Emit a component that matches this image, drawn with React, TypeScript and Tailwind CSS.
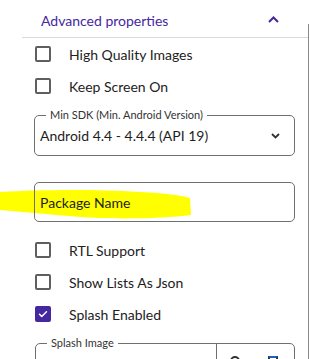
import React from "react";

const font = { fontFamily: "Lato, 'Noto Sans', sans-serif" };

function Box({ checked }: { checked?: boolean }) {
  if (checked) {
    return (
      <span className="flex h-4 w-4 items-center justify-center rounded-[2px] bg-[#4527a0]">
        <svg width="12" height="12" viewBox="0 0 24 24" fill="none" stroke="white" strokeWidth="3" strokeLinecap="round" strokeLinejoin="round">
          <path d="M5 12.5l4.5 4.5L19 7.5" />
        </svg>
      </span>
    );
  }
  return <span className="block h-4 w-4 rounded-[2px] border-2 border-[#5f5f5f]" />;
}

function Row({ label, checked }: { label: string; checked?: boolean }) {
  return (
    <div className="flex h-8 items-center pl-[13px]">
      <Box checked={checked} />
      <span className="ml-[18px] text-[14px] text-[#222]">{label}</span>
    </div>
  );
}

export default function App() {
  return (
    <div className="h-[359px] w-[310px] overflow-hidden bg-white" style={font}>
      <div className="ml-[22px] w-[287px]">
        <div className="relative flex h-[38px] items-center border-b border-[#d9d9d9] pl-[19px] pr-[30px]">
          <span className="pt-[4px] text-[14px] text-[#4527a0]">Advanced properties</span>
          <svg className="ml-auto mt-[2px]" width="11" height="7" viewBox="0 0 11 7" fill="none" stroke="#4527a0" strokeWidth="2">
            <path d="M1 6l4.5-4.5L10 6" />
          </svg>
          <span className="absolute right-0 top-[24px] h-[15px] w-px bg-[#8a8a8a]" />
        </div>
        <div className="border-r border-[#8a8a8a] pb-4">
          <Row label="High Quality Images" />
          <Row label="Keep Screen On" />
          <div className="pl-[12px] pr-[13px] pt-[13px]">
            <div className="relative flex h-[41px] items-center rounded-[5px] border border-[#6f6f6f] pl-[5px] pr-[14px]">
              <span className="absolute -top-[8px] left-[11px] bg-white px-[4px] text-[11px] leading-[14px] text-[#333]">Min SDK (Min. Android Version)</span>
              <span className="text-[14px] text-[#1e1e1e]">Android 4.4 - 4.4.4 (API 19)</span>
              <svg className="ml-auto" width="9" height="6" viewBox="0 0 9 6" fill="none" stroke="#333" strokeWidth="1.8">
                <path d="M1 1l3.5 3.5L8 1" />
              </svg>
            </div>
          </div>
          <div className="relative pl-[12px] pr-[13px] pt-[26px]">
            <svg className="absolute left-[-22px] top-[32px]" width="200" height="34" viewBox="0 0 200 34">
              <path d="M0 4 C40 2 90 1 140 4 C165 5 185 8 190 10 L191 27 C170 30 130 31 100 30 C70 29 40 25 0 22 Z" fill="#ffff00" />
            </svg>
            <div className="relative flex h-[40px] items-center rounded-[5px] border border-[#6f6f6f] pl-[5px]">
              <span className="relative text-[14px] text-[#1e1e1e]">Package Name</span>
            </div>
          </div>
          <div className="pt-[12px]">
            <Row label="RTL Support" />
            <Row label="Show Lists As Json" />
            <Row label="Splash Enabled" checked />
          </div>
          <div className="pl-[13px] pr-[13px] pt-[13px]">
            <div className="relative flex h-[40px] rounded-[5px] border border-[#6f6f6f]">
              <span className="absolute -top-[8px] left-[11px] bg-white px-[4px] text-[11px] leading-[14px] text-[#333]">Splash Image</span>
              <div className="w-[181px] border-r border-[#6f6f6f]" />
              <div className="flex flex-1 items-start gap-[28px] pl-[13px] pt-[12px]">
                <span className="block h-[10px] w-[10px] rounded-full border-2 border-[#333]" />
                <span className="block h-[10px] w-[10px] border-2 border-[#333] border-t-[#1565c0]" />
              </div>
            </div>
          </div>
        </div>
      </div>
    </div>
  );
}
